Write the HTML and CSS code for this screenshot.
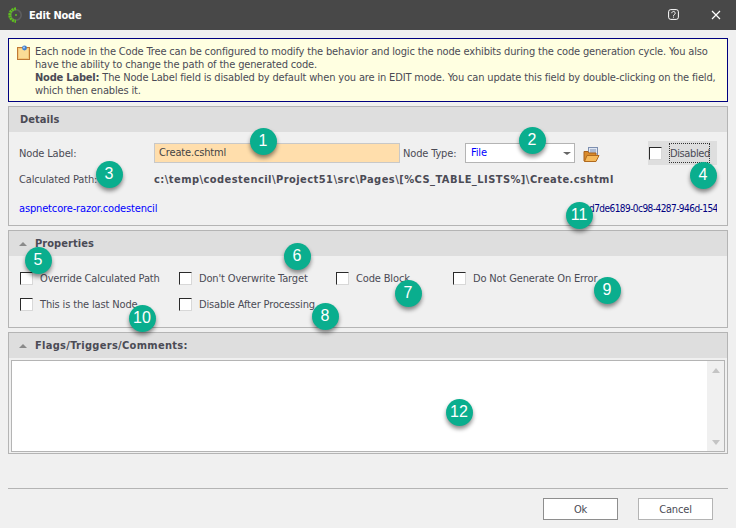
FILE: index.html
```html
<!DOCTYPE html>
<html lang="en">
<head>
<meta charset="utf-8">
<title>Edit Node</title>
<link rel="stylesheet" href="styles.css">
</head>
<body>
<div class="dialog">
  <header class="titlebar">
    <svg class="logo" width="16" height="16" viewBox="0 0 16 16"><circle cx="8" cy="8" r="5.200" fill="none" stroke="#5e5e5e" stroke-width="1.6"/><path d="M8 1.800A6.200 6.200 0 0 0 8 14.200" fill="none" stroke="#5fc01f" stroke-width="3" stroke-dasharray="1.900 .6"/><circle cx="8" cy="8" r="1" fill="#5fc01f"/></svg>
    <span class="title">Edit Node</span>
    <svg class="help" width="12" height="12" viewBox="0 0 12 12"><rect x=".6" y=".6" width="9.800" height="9.800" rx="2.200" fill="none" stroke="#fff" stroke-width="1"/><path d="M3.800 4.200a1.700 1.700 0 1 1 2.600 1.400c-.6.4-.9.6-.9 1.300" fill="none" stroke="#fff" stroke-width="1"/><rect x="5" y="7.600" width="1" height="1" fill="#fff"/></svg>
    <svg class="close" width="10" height="10" viewBox="0 0 10 10"><path d="M1 1l8 8M9 1l-8 8" stroke="#fff" stroke-width="1.200"/></svg>
  </header>

  <main class="content">
    <section class="info">
      <svg class="note" width="14" height="15" viewBox="0 0 14 15"><rect x=".5" y="2.500" width="12" height="12" fill="#f5c878" stroke="#c07a35"/><rect x="2" y="4" width="9" height="9" fill="#fbdc95"/><circle cx="7.500" cy="3" r="2.400" fill="#3f7fd0"/><circle cx="7" cy="2.500" r=".9" fill="#bcd8f5"/></svg>
      <p class="info-text">Each node in the Code Tree can be configured to modify the behavior and logic the node exhibits during the code generation cycle. You also<br>have the ability to change the path of the generated code.<br><b>Node Label:</b> The Node Label field is disabled by default when you are in EDIT mode. You can update this field by double-clicking on the field,<br>which then enables it.</p>
    </section>

    <section class="panel panel-details">
      <h2 class="panel-head panel-head-plain">Details</h2>
      <div class="details-body">
        <div class="row row-top">
          <span class="field-label">Node Label:</span>
          <div class="text-input">Create.cshtml</div>
          <span class="type-label">Node Type:</span>
          <div class="select"><span>File</span><i class="select-arrow"></i></div>
          <svg class="folder" width="17" height="15" viewBox="0 0 17 15"><rect x="5.500" y=".5" width="9" height="8" fill="#dfe6f2" stroke="#7d8fb0"/><path d="M7 3h6M7 5h6" stroke="#7d8fb0"/><path d="M1 4.500h4l1 1.500h7v8H1z" fill="#d98a2b" stroke="#a8601a"/><path d="M1.500 14.500L4 8.500h12l-3 6z" fill="#f6b95a" stroke="#b06a1e"/></svg>
          <div class="disabled-box"><span class="check"></span><span class="focus-label">Disabled</span></div>
        </div>
        <div class="row row-path">
          <span class="field-label">Calculated Path:</span>
          <strong class="path">c:\temp\codestencil\Project51\src\Pages\[%CS_TABLE_LISTS%]\Create.cshtml</strong>
        </div>
        <div class="row row-links">
          <span class="link">aspnetcore-razor.codestencil</span>
          <span class="guid">d7de6189-0c98-4287-946d-154b</span>
        </div>
      </div>
    </section>

    <section class="panel panel-props">
      <h2 class="panel-head"><i class="chevron"></i>Properties</h2>
      <div class="props">
        <label class="opt"><span class="check"></span>Override Calculated Path</label>
        <label class="opt"><span class="check"></span>Don't Overwrite Target</label>
        <label class="opt"><span class="check"></span>Code Block</label>
        <label class="opt"><span class="check"></span>Do Not Generate On Error</label>
        <label class="opt"><span class="check"></span>This is the last Node</label>
        <label class="opt"><span class="check"></span>Disable After Processing</label>
      </div>
    </section>

    <section class="panel panel-flags">
      <h2 class="panel-head panel-head-wide"><i class="chevron"></i>Flags/Triggers/Comments:</h2>
      <div class="memo">
        <div class="memo-text"></div>
        <div class="scroll"><i class="scroll-up"></i><i class="scroll-down"></i></div>
      </div>
    </section>

    <hr class="divider">
    <footer class="buttons">
      <button class="btn btn-default">Ok</button>
      <button class="btn">Cancel</button>
    </footer>
  </main>

  <span class="badge b1">1</span>
  <span class="badge b2">2</span>
  <span class="badge b3">3</span>
  <span class="badge b4">4</span>
  <span class="badge b5">5</span>
  <span class="badge b6">6</span>
  <span class="badge b7">7</span>
  <span class="badge b8">8</span>
  <span class="badge b9">9</span>
  <span class="badge b10">10</span>
  <span class="badge b11">11</span>
  <span class="badge b12">12</span>
</div>
</body>
</html>
```
FILE: styles.css
```css
* { box-sizing: border-box; }
html, body { margin: 0; padding: 0; }
body {
  width: 736px;
  height: 528px;
  overflow: hidden;
  background: #f0f0f0;
  font-family: "DejaVu Sans Condensed", "DejaVu Sans", sans-serif;
  font-stretch: condensed;
  font-size: 11px;
  letter-spacing: -.15px;
  color: #4b4b55;
}
.dialog { position: relative; width: 736px; height: 528px; }

.titlebar {
  display: flex;
  align-items: center;
  height: 30px;
  background: #484848;
  color: #fff;
  padding: 0 15px 0 8px;
}
.logo { flex: none; }
.title { margin-left: 5px; font-weight: bold; font-size: 11px; letter-spacing: -.2px; }
.help { margin-left: auto; margin-right: 31px; }

.content { padding: 8px 8px 0; }

.info {
  display: flex;
  height: 64px;
  border: 1px solid #000080;
  background: #ffffe1;
  padding: 6px 0 0 8px;
}
.note { flex: none; margin-right: 4px; }
.info-text { margin: 0; line-height: 13px; color: #4b4b55; white-space: nowrap; letter-spacing: -.16px; }
.info-text b { font-weight: bold; letter-spacing: -.2px; }

.panel { border: 1px solid #b4b4b4; margin-top: 4px; }
.panel-details { height: 120px; }
.panel-props { height: 98px; }
.panel-flags { height: 122px; }
.panel-head {
  display: flex;
  align-items: center;
  height: 25px;
  margin: 0;
  background: #dedede;
  font-size: 11px;
  font-weight: bold;
  letter-spacing: .05px;
  color: #4b4b55;
  padding-left: 9px;
}
.panel-head-plain { padding-left: 11px; }
.panel-head-wide { letter-spacing: .3px; }
.chevron {
  width: 0; height: 0;
  margin: 0 8px 0 1px;
  border-left: 4px solid transparent;
  border-right: 4px solid transparent;
  border-bottom: 4px solid #8a8a8a;
}

.details-body { padding: 11px 10px 0 10px; }
.row { display: flex; align-items: center; }
.row-top { height: 20px; }
.field-label { flex: none; width: 135px; }
.text-input {
  flex: none;
  width: 246px;
  height: 20px;
  line-height: 18px;
  background: #ffdeac;
  border: 1px solid #c8c8c8;
  padding-left: 4px;
  color: #444;
}
.type-label { flex: none; width: 62px; margin-left: 3px; }
.select {
  flex: none;
  position: relative;
  width: 110px;
  height: 20px;
  line-height: 18px;
  background: #fff;
  border: 1px solid #b4b4b4;
  padding-left: 5px;
  color: #0000ff;
}
.select-arrow {
  position: absolute;
  right: 3px;
  top: 8px;
  border-left: 4px solid transparent;
  border-right: 4px solid transparent;
  border-top: 3px solid #666;
}
.folder { flex: none; margin: 2px 0 0 8px; }
.disabled-box {
  flex: none;
  display: flex;
  align-items: center;
  width: 69px;
  height: 24px;
  margin: 0 0 0 48px;
  padding-left: 1px;
  background: #dedede;
}
.focus-label {
  flex: none;
  height: 20px;
  width: 41px;
  margin-left: 7px;
  border: 1px dotted #333;
  line-height: 20px;
  letter-spacing: -.4px;
  white-space: nowrap;
}
.check {
  flex: none;
  display: inline-block;
  width: 13px;
  height: 13px;
  background: #fff;
  border: 1px solid;
  border-color: #2a2a2a #d8d8d8 #d8d8d8 #2a2a2a;
}
.row-path { margin-top: 6px; height: 20px; }
.path { font-weight: bold; white-space: nowrap; letter-spacing: .45px; color: #4b4b55; }
.row-links { margin-top: 9px; height: 20px; }
.link { color: #0000ff; }
.guid {
  margin-left: auto;
  width: 128px;
  overflow: hidden;
  white-space: nowrap;
  color: #000080;
  font-size: 10px;
  letter-spacing: -.55px;
}

.props {
  display: grid;
  grid-template-columns: 159px 157px 117px 1fr;
  grid-auto-rows: 26px;
  padding: 9px 0 0 11px;
}
.opt { display: flex; align-items: center; white-space: nowrap; }
.opt .check { margin-right: 7px; }

.memo {
  display: flex;
  height: 92px;
  margin: 2px 2px 0 2px;
  border: 1px solid #b4b4b4;
  background: #fff;
}
.memo-text { flex: 1; }
.scroll {
  flex: none;
  display: flex;
  flex-direction: column;
  justify-content: space-between;
  align-items: center;
  width: 17px;
  background: #f0f0f0;
  padding: 7px 0 6px;
}
.scroll-up, .scroll-down {
  border-left: 4px solid transparent;
  border-right: 4px solid transparent;
}
.scroll-up { border-bottom: 5px solid #c4c4c4; }
.scroll-down { border-top: 5px solid #c4c4c4; }

.divider {
  height: 1px;
  margin: 34px 0 0;
  border: 0;
  background: #b4b4b4;
}
.buttons {
  display: flex;
  justify-content: flex-end;
  gap: 20px;
  padding: 9px 15px 0 0;
}
.btn {
  width: 75px;
  height: 22px;
  padding: 0;
  background: #fff;
  border: 1px solid #b4b4b4;
  font: inherit;
  letter-spacing: inherit;
  color: #4b4b55;
}
.btn-default { border-color: #8e8e8e; }

.badge {
  position: absolute;
  width: 27px;
  height: 27px;
  margin: -13.5px 0 0 -13.5px;
  border-radius: 50%;
  background: #0aae8e;
  box-shadow: 0 3px 4px rgba(0, 0, 0, .45);
  color: #fff;
  font-family: "Liberation Sans", sans-serif;
  font-stretch: normal;
  letter-spacing: 0;
  font-size: 16px;
  line-height: 25px;
  text-align: center;
}
.b1 { left: 263px; top: 141px; }
.b2 { left: 532px; top: 140px; }
.b3 { left: 109px; top: 174px; }
.b4 { left: 703px; top: 175px; }
.b5 { left: 38px; top: 260px; }
.b6 { left: 297px; top: 256px; }
.b7 { left: 408px; top: 293px; }
.b8 { left: 325px; top: 316px; }
.b9 { left: 607px; top: 290px; }
.b10 { left: 142px; top: 318px; }
.b11 { left: 579px; top: 215px; }
.b12 { left: 459px; top: 412px; }
```
